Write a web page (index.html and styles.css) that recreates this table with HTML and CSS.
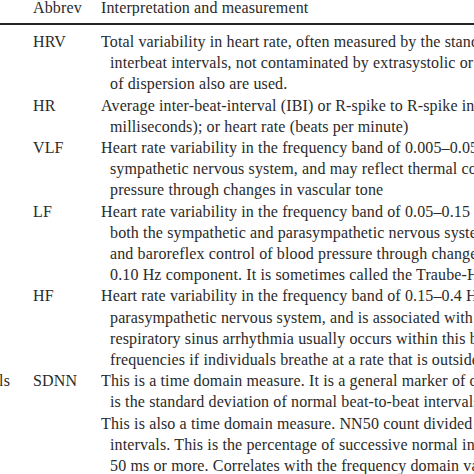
FILE: index.html
```html
<!DOCTYPE html>
<html>
<head>
<meta charset="utf-8">
<link rel="stylesheet" href="styles.css">
</head>
<body>
<div class="table">
  <div class="row head">
    <div class="c1"></div>
    <div class="c2">Abbrev</div>
    <div class="c3"><div class="l">Interpretation and measurement</div></div>
  </div>
  <div class="body">
    <div class="row">
      <div class="c1"></div>
      <div class="c2">HRV</div>
      <div class="c3">
        <div class="l">Total variability in heart rate, often measured by the standard deviation of</div>
        <div class="l ind">interbeat intervals, not contaminated by extrasystolic or other artifacts. Other measures</div>
        <div class="l ind">of dispersion also are used.</div>
      </div>
    </div>
    <div class="row">
      <div class="c1"></div>
      <div class="c2">HR</div>
      <div class="c3">
        <div class="l">Average inter-beat-interval (IBI) or R-spike to R-spike interval (in</div>
        <div class="l ind">milliseconds); or heart rate (beats per minute)</div>
      </div>
    </div>
    <div class="row">
      <div class="c1"></div>
      <div class="c2">VLF</div>
      <div class="c3">
        <div class="l">Heart rate variability in the frequency band of 0.005–0.05 Hz. Mediated by the</div>
        <div class="l ind">sympathetic nervous system, and may reflect thermal control of blood</div>
        <div class="l ind">pressure through changes in vascular tone</div>
      </div>
    </div>
    <div class="row">
      <div class="c1"></div>
      <div class="c2">LF</div>
      <div class="c3">
        <div class="l">Heart rate variability in the frequency band of 0.05–0.15 Hz. Mediated by</div>
        <div class="l ind">both the sympathetic and parasympathetic nervous systems</div>
        <div class="l ind">and baroreflex control of blood pressure through changes in</div>
        <div class="l ind">0.10 Hz component. It is sometimes called the Traube-Hering-Mayer</div>
      </div>
    </div>
    <div class="row">
      <div class="c1"></div>
      <div class="c2">HF</div>
      <div class="c3">
        <div class="l">Heart rate variability in the frequency band of 0.15–0.4 Hz. Mediated by the</div>
        <div class="l ind">parasympathetic nervous system, and is associated with respiration</div>
        <div class="l ind">respiratory sinus arrhythmia usually occurs within this band, but at</div>
        <div class="l ind">frequencies if individuals breathe at a rate that is outside this range</div>
      </div>
    </div>
    <div class="row">
      <div class="c1">Time-domain intervals</div>
      <div class="c2">SDNN</div>
      <div class="c3">
        <div class="l">This is a time domain measure. It is a general marker of overall HRV. It</div>
        <div class="l ind">is the standard deviation of normal beat-to-beat intervals</div>
      </div>
    </div>
    <div class="row">
      <div class="c1"></div>
      <div class="c2"></div>
      <div class="c3">
        <div class="l">This is also a time domain measure. NN50 count divided by the total number of</div>
        <div class="l ind">intervals. This is the percentage of successive normal intervals differing by</div>
        <div class="l ind">50 ms or more. Correlates with the frequency domain variable HF</div>
      </div>
    </div>
  </div>
</div>
</body>
</html>
```

FILE: styles.css
```css
html, body {
  margin: 0;
  padding: 0;
  background: #ffffff;
}
body {
  width: 474px;
  height: 474px;
  overflow: hidden;
  font-family: "Liberation Serif", "Times New Roman", serif;
  font-size: 16px;
  letter-spacing: 0.13px;
  color: #2a2a2a;
}
.table {
  width: 474px;
  overflow: hidden;
}
.row {
  display: grid;
  grid-template-columns: 33px 68px 1fr;
  line-height: 21.2px;
  white-space: nowrap;
}
.c1 {
  overflow: hidden;
  display: flex;
  justify-content: flex-end;
  padding-right: 23px;
}
.c3 {
  overflow: hidden;
}
.head {
  line-height: 16px;
  padding-bottom: 7px;
  border-bottom: 2px solid #262626;
}
.body {
  padding-top: 6px;
}
.ind {
  padding-left: 9px;
}
```
